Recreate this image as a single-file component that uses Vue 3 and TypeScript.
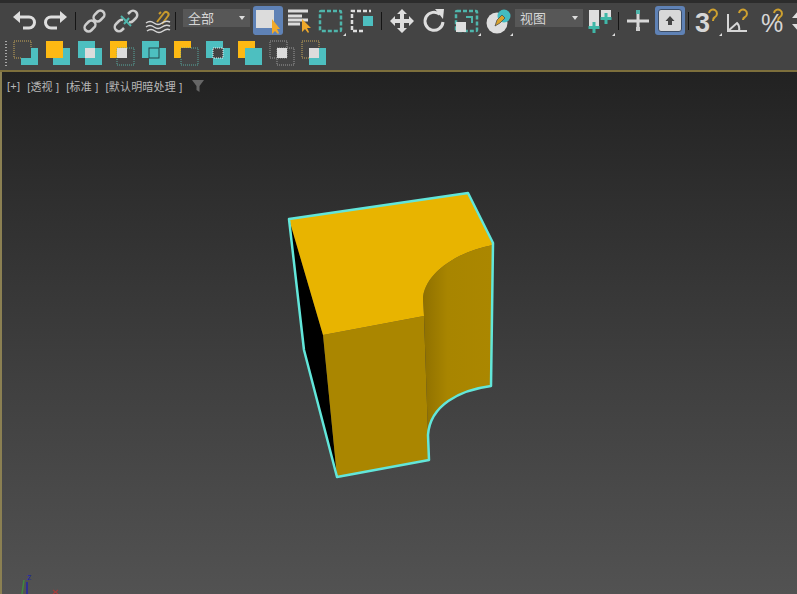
<template>
  <div class="app">
    <div class="bar bar-main">
      <span class="grip"></span>
      <svg class="ic" viewBox="0 0 32 32"><path class="w3" d="M9 12H21a5.500 5.500 0 0 1 0 11H15" /><path class="w" d="M5 12L12 6V18Z" /></svg>
      <svg class="ic" viewBox="0 0 32 32"><path class="w3" d="M23 12H11a5.500 5.500 0 0 0 0 11H17" /><path class="w" d="M27 12L20 6V18Z" /></svg>
      <span class="sep"></span>
      <svg class="ic" viewBox="0 0 32 32">
        <rect class="chain" x="15" y="7" width="12" height="8" rx="4" transform="rotate(-45 21 11)" />
        <rect class="chain" x="6" y="17" width="12" height="8" rx="4" transform="rotate(-45 12 21)" />
      </svg>
      <svg class="ic" viewBox="0 0 32 32">
        <path class="chain" d="M18 9l2-2a4 4 0 0 1 6 6l-3 3a4 4 0 0 1-4 1" />
        <path class="chain" d="M14 23l-2 2a4 4 0 0 1-6-6l3-3a4 4 0 0 1 4-1" />
        <path class="teal-line" d="M11 11L21 21M14 19l5-6" />
      </svg>
      <svg class="ic" viewBox="0 0 32 32">
        <path class="gold-chain" d="M15 17l7-9a2.500 2.500 0 0 1 4 3l-6 8M17 9l2-2" />
        <path class="wave" d="M4 18q4-3 8 0t8 0 8-1M4 22q4-3 8 0t8 0 8-1M5 26q4-3 8 0t8 0 7-1" />
      </svg>
      <span class="sep sep-tight"></span>
      <div class="combo combo-all"><span>全部</span><i></i></div>
      <div class="hot hot-select">
        <svg viewBox="0 0 30 29"><rect x="3" y="4" width="18" height="18" fill="#dcdcdc" /><path d="M19 13v15l3-3 3 3 1-1-2-4h3Z" fill="#f0a92a" /></svg>
      </div>
      <svg class="ic" viewBox="0 0 32 32">
        <path class="list" d="M5 6H25M5 11H19M5 15H25M5 19H17" />
        <path d="M19 14v13l3-3 3 4 1-1-2-4h4Z" fill="#f0a92a" />
      </svg>
      <svg class="ic" viewBox="0 0 32 32">
        <rect class="dash-teal" x="5" y="6" width="21" height="20" rx="1" />
        <path class="corner" d="M31 28v3h-3Z" />
      </svg>
      <svg class="ic" viewBox="0 0 32 32">
        <path class="dash-white" d="M14 6H5V26H16M16 6H24" />
        <rect x="16" y="11" width="10" height="10" fill="#4dbfc0" />
      </svg>
      <span class="sep sep-wide"></span>
      <svg class="ic" viewBox="0 0 32 32">
        <path class="w" d="M16 4l5 5h-3v5h5v-3l5 5-5 5v-3h-5v5h3l-5 5-5-5h3v-5H9v3l-5-5 5-5v3h5V9h-3Z" />
      </svg>
      <svg class="ic" viewBox="0 0 32 32">
        <path class="w3" d="M22 9.500A9 9 0 1 0 25 17" fill="none" />
        <path class="w" d="M17 4L26 4 25 14Z" />
      </svg>
      <svg class="ic" viewBox="0 0 32 32">
        <rect class="dash-teal" x="6" y="6" width="21" height="20" rx="1" />
        <path class="teal-line" d="M16 12h6v6" />
        <rect x="6" y="17" width="10" height="10" fill="#dedede" />
        <path class="corner" d="M31 28v3h-3Z" />
      </svg>
      <svg class="ic" viewBox="0 0 32 32">
        <circle cx="15" cy="18" r="10.500" fill="#dedede" />
        <circle cx="22" cy="11" r="6.500" fill="#43bcc0" />
        <path d="M13 21l2-6 5-5 3 3-5 5Z" fill="#d9a22a" stroke="#444" stroke-width=".7" />
        <path class="corner" d="M31 28v3h-3Z" />
      </svg>
      <div class="combo combo-view"><span>视图</span><i></i></div>
      <svg class="ic" viewBox="0 0 32 32">
        <rect x="5" y="5" width="10" height="18" fill="#dedede" />
        <rect x="17" y="5" width="10" height="9" fill="#dedede" />
        <path class="plus" d="M10 17v11M4.500 22.500h11M22 8v11M16.500 13.500h11" />
        <path class="corner" d="M31 28v3h-3Z" />
      </svg>
      <span class="sep sep-loose"></span>
      <svg class="ic" viewBox="0 0 32 32">
        <path class="cross" d="M5 16H27M16 9V22" />
        <rect x="14" y="5" width="4" height="4" fill="#4fb5ab" />
        <rect x="14" y="22" width="4" height="4" fill="#cfcfcf" />
      </svg>
      <div class="hot hot-key">
        <div class="key-face"><svg viewBox="0 0 12 12"><path d="M6 1l4.500 5H8v4H4V6H1.500Z" fill="#444" /></svg></div>
      </div>
      <span class="sep sep-tight"></span>
      <svg class="ic" viewBox="0 0 32 32">
        <text class="snap-num" x="4" y="27">3</text>
        <path class="hook" d="M18 8a4 4 0 1 1 6 4q-2 1-2 4" />
        <path class="corner" d="M31 28v3h-3Z" />
      </svg>
      <svg class="ic" viewBox="0 0 32 32">
        <path class="snap" d="M5 9V26H24M5 26L14 18Q17 21 16 26" />
        <path class="hook" d="M16 8a4 4 0 1 1 6 4q-2 1-2 3" />
      </svg>
      <svg class="ic" viewBox="0 0 32 32">
        <text class="snap-pct" x="6" y="27">%</text>
        <path class="hook" d="M19 8a4 4 0 1 1 6 4q-2 1-2 4" />
      </svg>
      <svg class="ic" viewBox="0 0 32 32">
        <path class="w" d="M5 13L11 6 17 13ZM5 19H17L11 26Z" />
      </svg>
    </div>

    <div class="bar bar-sets">
      <span class="grip grip-small"></span>
      <svg v-for="(icon, i) in setIcons" :key="i" class="set" viewBox="0 0 32 32">
        <rect x="4" y="3" width="17" height="17" :class="icon.a" />
        <rect x="11" y="10" width="17" height="17" :class="icon.b" />
        <rect x="11" y="10" width="10" height="10" :class="icon.c" />
      </svg>
    </div>

    <div class="viewport">
      <div class="labels">
        <span>[+]</span>
        <span>[透视 ]</span>
        <span>[标准 ]</span>
        <span>[默认明暗处理 ]</span>
        <svg class="filter" viewBox="0 0 14 14"><path d="M1 1H13L8.500 7V13L5.500 11V7Z" fill="#666" /></svg>
      </div>
      <svg class="scene" viewBox="0 72 797 522">
        <defs>
          <linearGradient id="curveShade" x1="0" x2="1" y1="0" y2="0">
            <stop offset="0" stop-color="#8f7000" />
            <stop offset=".35" stop-color="#a88500" />
            <stop offset="1" stop-color="#ab8700" />
          </linearGradient>
        </defs>
        <path d="M289 219L304 350 337 477 323 335Z" fill="#000" />
        <path d="M323 335L424 316 428 435 429 460 337 477Z" fill="#aa8600" />
        <path d="M423 300C423 275 455 252 493 245L491 386C460 390 430 405 428 435L424 316Z" fill="url(#curveShade)" />
        <path d="M289 219L468 193 493 245C455 252 423 275 423 300L424 316 323 335Z" fill="#e8b400" />
        <path
          class="outline"
          d="M289 219L468 193 493 243 491 386C460 390 430 405 428 435L429 460 337 477 304 350Z"
        />
        <text class="axis-z" x="27" y="580">z</text>
        <path d="M27 582V594" stroke="#2226a8" stroke-width="1.500" />
        <path d="M24 580L22 594" stroke="#3f8a3f" stroke-width="1.500" />
        <path d="M53 590L58 594M58 590L53 594" stroke="#a33a3a" stroke-width="1.200" />
      </svg>
    </div>
  </div>
</template>

<script setup lang="ts">
interface SetIcon {
  a: string
  b: string
  c: string
}

const setIcons: SetIcon[] = [
  { a: 'dash-gold', b: 'fill-teal', c: 'fill-bg' },
  { a: 'fill-gold', b: 'fill-teal', c: 'fill-gold' },
  { a: 'fill-teal', b: 'fill-teal', c: 'fill-light' },
  { a: 'fill-gold', b: 'dash-teal-thin', c: 'fill-light' },
  { a: 'fill-teal', b: 'fill-teal', c: 'fill-teal-line' },
  { a: 'fill-gold', b: 'dash-teal-thin', c: 'fill-bg' },
  { a: 'fill-teal', b: 'fill-teal', c: 'fill-dark-dash' },
  { a: 'fill-gold', b: 'fill-teal', c: 'fill-teal' },
  { a: 'dash-grey', b: 'dash-grey', c: 'fill-light' },
  { a: 'dash-gold', b: 'fill-teal', c: 'fill-light' }
]
</script>

<style>
html,
body {
  margin: 0;
  background: #444;
}
</style>

<style scoped>
.app {
  width: 797px;
  height: 594px;
  display: flex;
  flex-direction: column;
  overflow: hidden;
  background: #444;
  font-family: "Liberation Sans", "Noto Sans CJK SC", sans-serif;
}

.bar {
  display: flex;
  align-items: center;
  flex: none;
}

.bar-main {
  height: 35px;
  border-top: 3px solid #2c2c2c;
  padding-left: 5px;
}

.bar-sets {
  height: 32px;
  padding-left: 5px;
  border-bottom: 2px solid #7d6f3c;
}

.grip {
  width: 2px;
  height: 26px;
  margin-right: 3px;
  background: repeating-linear-gradient(#a8a8a8 0 1px, transparent 1px 3px);
}

.grip-small {
  height: 26px;
  margin-right: 0;
}

.ic {
  width: 32px;
  height: 32px;
  flex: none;
}

.set {
  width: 32px;
  height: 32px;
  flex: none;
}

.set:first-of-type {
  margin-left: 3px;
}

.sep {
  width: 1px;
  height: 18px;
  margin: 0 2px 0 3px;
  flex: none;
  background: #151515;
}

.sep-tight {
  margin: 0 2px 0 1px;
}

.sep-wide {
  margin: 0 4px 0 2px;
}

.sep-loose {
  margin: 0 3px 0 2px;
}

.combo {
  height: 18px;
  display: flex;
  align-items: center;
  justify-content: space-between;
  flex: none;
  box-sizing: border-box;
  padding: 0 5px;
  background: #575757;
  color: #d6d6d6;
  font-size: 13px;
}

.combo i {
  border-left: 3px solid transparent;
  border-right: 3px solid transparent;
  border-top: 4px solid #ddd;
}

.combo-all {
  width: 67px;
  margin: 0 3px 6px 5px;
}

.combo-view {
  width: 68px;
  margin: 0 1px 6px 1px;
}

.hot {
  width: 30px;
  height: 29px;
  box-sizing: border-box;
  flex: none;
  background: #5f82b6;
  border-radius: 3px;
  overflow: hidden;
}

.hot svg {
  display: block;
}

.hot-key {
  margin-left: 1px;
  margin-right: 2px;
  padding: 3px;
}

.key-face {
  height: 100%;
  display: flex;
  align-items: center;
  justify-content: center;
  border-radius: 3px;
  background: #d8d8d8;
  border: 1px solid #3c4d66;
  box-sizing: border-box;
}

.key-face svg {
  width: 12px;
  height: 12px;
}

.w {
  fill: #dedede;
}

.w3 {
  fill: none;
  stroke: #dedede;
  stroke-width: 3;
}

.chain {
  fill: none;
  stroke: #cdcdcd;
  stroke-width: 2.500;
}

.teal-line {
  fill: none;
  stroke: #4fb5ab;
  stroke-width: 2;
}

.gold-chain {
  fill: none;
  stroke: #c79a2d;
  stroke-width: 2;
}

.wave {
  fill: none;
  stroke: #d5d5d5;
  stroke-width: 1.500;
}

.list {
  fill: none;
  stroke: #dcdcdc;
  stroke-width: 3;
}

.dash-teal {
  fill: none;
  stroke: #4fb5ab;
  stroke-width: 2.500;
  stroke-dasharray: 4 2;
}

.dash-white {
  fill: none;
  stroke: #dedede;
  stroke-width: 2.500;
  stroke-dasharray: 4 2;
}

.corner {
  fill: #dedede;
}

.plus {
  fill: none;
  stroke: #3fb7a8;
  stroke-width: 3;
}

.cross {
  fill: none;
  stroke: #d8d8d8;
  stroke-width: 3;
}

.hook {
  fill: none;
  stroke: #cfa12f;
  stroke-width: 2;
}

.snap {
  fill: none;
  stroke: #d6d6d6;
  stroke-width: 2;
}

.snap-num {
  fill: #d6d6d6;
  font-size: 27px;
  font-weight: 700;
}

.snap-pct {
  fill: #d6d6d6;
  font-size: 25px;
}

.fill-teal {
  fill: #4dbfc0;
}

.fill-gold {
  fill: #fdb913;
}

.fill-light {
  fill: #dcdcdc;
}

.fill-bg {
  fill: #444;
}

.fill-teal-line {
  fill: #4dbfc0;
  stroke: #24474a;
}

.fill-dark-dash {
  fill: #444;
  stroke: #eee;
  stroke-dasharray: 1 1;
}

.dash-gold {
  fill: none;
  stroke: #c8a858;
  stroke-dasharray: 1 1;
}

.dash-grey {
  fill: none;
  stroke: #9a9a9a;
  stroke-dasharray: 1 1;
}

.dash-teal-thin {
  fill: #444;
  stroke: #56a99f;
  stroke-dasharray: 1 1;
}

.viewport {
  position: relative;
  flex: 1;
  box-sizing: border-box;
  border-left: 2px solid #8b8052;
  background: linear-gradient(#222 0%, #2f2f2f 25%, #404040 60%, #525252 100%);
}

.labels {
  display: flex;
  align-items: center;
  gap: 7px;
  height: 28px;
  padding-left: 5px;
  color: #b8b8b8;
  font-size: 11px;
  letter-spacing: 0.2px;
}

.filter {
  width: 14px;
  height: 14px;
  margin-left: 2px;
}

.scene {
  position: absolute;
  left: -2px;
  top: 0;
  width: 797px;
  height: 522px;
}

.outline {
  fill: none;
  stroke: #62e6da;
  stroke-width: 2.500;
  stroke-linejoin: round;
}

.axis-z {
  fill: #2226a8;
  font-size: 9px;
}
</style>
